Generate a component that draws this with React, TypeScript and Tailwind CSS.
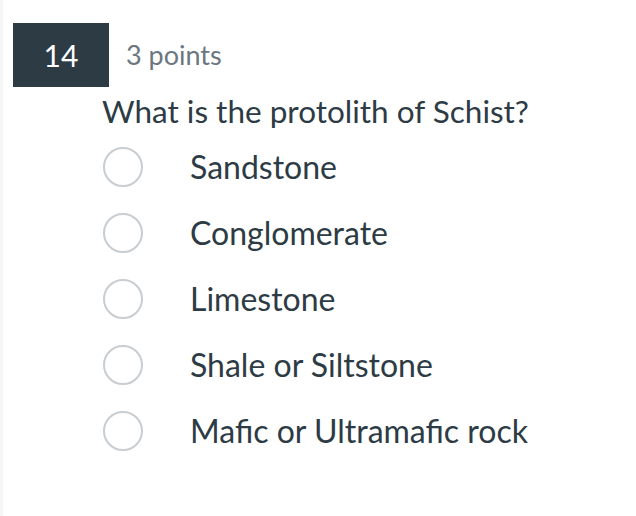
const options = ["Sandstone", "Conglomerate", "Limestone", "Shale or Siltstone", "Mafic or Ultramafic rock"];

export default function App() {
  return (
    <div className="flex h-[516px] w-[636px] bg-white font-['Lato','Liberation_Sans',sans-serif] text-[#2d3b45]">
      <div className="w-[3px] bg-[#f5f5f5]" />
      <div className="flex flex-col pl-[10px] pt-[23px]">
        <div className="flex items-center">
          <div className="flex h-[64px] w-[96px] items-center justify-center bg-[#2d3b45] text-[30px] text-white">14</div>
          <div className="ml-[17px] text-[27px] text-[#6b7780]">3 points</div>
        </div>
        <div className="ml-[89px] mt-[4px] text-[31.5px] leading-[40px]">What is the protolith of Schist?</div>
        <div className="ml-[90px] mt-[3px] flex flex-col">
          {options.map((o) => (
            <div key={o} className="flex h-[66px] items-center">
              <div className="h-[40px] w-[40px] rounded-full border-2 border-[#c7cdd1]" />
              <div className="ml-[47px] text-[32px]">{o}</div>
            </div>
          ))}
        </div>
      </div>
    </div>
  );
}
